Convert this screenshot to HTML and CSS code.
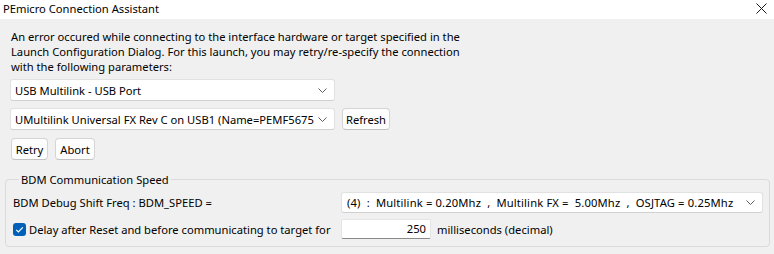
FILE: index.html
```html
<!DOCTYPE html>
<html>
<head>
<meta charset="utf-8">
<link rel="stylesheet" href="styles.css">
</head>
<body>
<div class="window">
  <div class="titlebar">
    <span class="title">PEmicro Connection Assistant</span>
    <svg class="close" width="11" height="11" viewBox="0 0 11 11"><path d="M0.5 0.5 L10.5 10.5 M10.5 0.5 L0.5 10.5" stroke="#1a1a1a" stroke-width="1" fill="none"/></svg>
  </div>
  <div class="content">
    <p class="message">An error occured while connecting to the interface hardware or target specified in the<br>Launch Configuration Dialog. For this launch, you may retry/re-specify the connection<br>with the following parameters:</p>
    <div class="combo combo-port">
      <span class="combo-text">USB Multilink - USB Port</span>
      <svg class="chev" width="9" height="5" viewBox="0 0 9 5"><path d="M0.5 0.5 L4.5 4.5 L8.5 0.5" stroke="#5f5f5f" stroke-width="1" fill="none"/></svg>
    </div>
    <div class="row-dev">
      <div class="combo combo-port">
        <span class="combo-text">UMultilink Universal FX Rev C on USB1 (Name=PEMF5675</span>
        <svg class="chev" width="9" height="5" viewBox="0 0 9 5"><path d="M0.5 0.5 L4.5 4.5 L8.5 0.5" stroke="#5f5f5f" stroke-width="1" fill="none"/></svg>
      </div>
      <button class="btn btn-refresh">Refresh</button>
    </div>
    <div class="row-btns">
      <button class="btn btn-retry">Retry</button>
      <button class="btn btn-abort">Abort</button>
    </div>
  </div>
  <fieldset class="group">
    <legend>BDM Communication Speed</legend>
    <div class="grid">
      <span class="label">BDM Debug Shift Freq : BDM_SPEED =</span>
      <div class="combo combo-speed">
        <span class="combo-text speed-text">(4)  :  Multilink = 0.20Mhz  ,  Multilink FX =  5.00Mhz  ,  OSJTAG = 0.25Mhz</span>
        <svg class="chev" width="9" height="5" viewBox="0 0 9 5"><path d="M0.5 0.5 L4.5 4.5 L8.5 0.5" stroke="#5f5f5f" stroke-width="1" fill="none"/></svg>
      </div>
      <label class="check-label">
        <span class="checkbox"><svg width="13" height="13" viewBox="0 0 13 13"><path d="M3.2 6.8 L5.4 9 L9.8 4.4" stroke="#ffffff" stroke-width="1.2" fill="none"/></svg></span>
        <span>Delay after Reset and before communicating to target for</span>
      </label>
      <div class="delay">
        <span class="textbox">250</span>
        <span class="units">milliseconds (decimal)</span>
      </div>
    </div>
  </fieldset>
</div>
</body>
</html>
```
FILE: styles.css
```css
html, body {
  margin: 0;
  padding: 0;
}
body {
  width: 774px;
  height: 254px;
  background: #f0f0f0;
  font-family: "Segoe UI", "Noto Sans", sans-serif;
  font-size: 11.2px;
  color: #000;
  overflow: hidden;
  white-space: nowrap;
}
.window {
  display: flex;
  flex-direction: column;
}
.titlebar {
  height: 19px;
  background: #ffffff;
  display: flex;
  align-items: center;
  justify-content: space-between;
  padding: 0 7px 0 3px;
  box-sizing: border-box;
}
.title {
  line-height: 15px;
  margin-top: -2px;
}
.close {
  display: block;
  margin-top: -3px;
}
.content {
  padding: 10px 0 0 10px;
  display: flex;
  flex-direction: column;
}
.message {
  margin: 0 0 5px 1px;
  line-height: 15px;
}
.combo {
  height: 22px;
  box-sizing: border-box;
  background: #ffffff;
  border: 1px solid #e1e1e1;
  border-bottom-color: #d0d0d0;
  border-radius: 3px;
  display: flex;
  align-items: center;
  padding: 0 7px 0 4px;
  overflow: hidden;
}
.combo-port {
  width: 325px;
}
.combo-text {
  flex: 1;
  white-space: pre;
  overflow: hidden;
  line-height: 15px;
}
.speed-text {
  letter-spacing: 0.15px;
}
.chev {
  display: block;
  flex: none;
  margin-left: 4px;
}
.row-dev {
  display: flex;
  gap: 7px;
  margin-top: 7px;
}
.btn {
  font: inherit;
  color: #000;
  height: 22px;
  box-sizing: border-box;
  background: #fdfdfd;
  border: 1px solid #d5d5d5;
  border-bottom-color: #c2c2c2;
  border-radius: 4px;
  padding: 0;
  line-height: 15px;
}
.btn-refresh {
  width: 48px;
}
.row-btns {
  display: flex;
  gap: 7px;
  margin-top: 8px;
  padding-left: 1px;
}
.btn-retry {
  width: 37px;
}
.btn-abort {
  width: 40px;
}
.group {
  margin: 12px 4px 0 5px;
  border: 1px solid #dadada;
  border-radius: 4px;
  padding: 5px 6px 7px 7px;
}
.group legend {
  padding: 0 2px;
  margin-left: 6px;
  line-height: 15px;
}
.grid {
  display: grid;
  grid-template-columns: 328px 1fr;
  row-gap: 6px;
  align-items: center;
}
.label {
  line-height: 15px;
}
.combo-speed {
  height: 21px;
  padding-left: 5px;
}
.check-label {
  display: flex;
  align-items: center;
  gap: 3px;
}
.checkbox {
  width: 13px;
  height: 13px;
  border-radius: 3px;
  background: #005fb8;
  display: block;
}
.checkbox svg {
  display: block;
}
.delay {
  display: flex;
  align-items: center;
  gap: 6px;
}
.textbox {
  width: 90px;
  height: 20px;
  box-sizing: border-box;
  background: #ffffff;
  border: 1px solid #e5e5e5;
  border-bottom: 1px solid #8a8a8a;
  border-radius: 2px;
  text-align: right;
  padding: 0 4px;
  line-height: 18px;
}
.units {
  line-height: 15px;
}
```
